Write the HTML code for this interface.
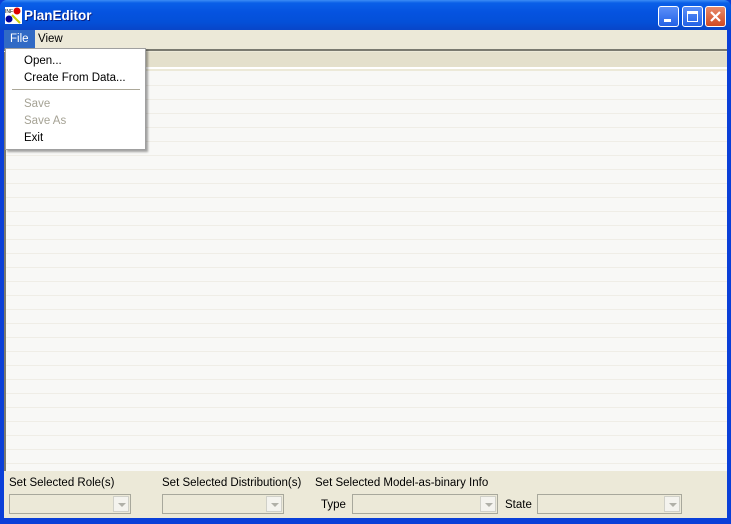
<!DOCTYPE html>
<html><head><style>
*{margin:0;padding:0;box-sizing:border-box}
body{width:731px;height:524px;overflow:hidden;background:#0a3fd8;font-family:"Liberation Sans",sans-serif;font-size:11.5px;position:relative}
.title{position:absolute;left:0;top:0;width:731px;height:30px;background:linear-gradient(#3d8cf5 0,#0a5fe8 3px,#0553e0 12px,#0450d8 22px,#0845c8 30px);border-radius:7px 7px 0 0}
.title span{position:absolute;left:24px;top:8px;color:#fff;font-weight:bold;font-size:13.5px;font-family:"Liberation Sans",sans-serif;text-shadow:1px 1px #0a1f80}
.btn{position:absolute;top:6px;width:21px;height:21px;border:1px solid #fff;border-radius:3px;background:linear-gradient(#5b8ff8,#2261e6)}
.frame{position:absolute;left:4px;top:30px;width:723px;height:488px;background:#ece9d8}
.menu{position:absolute;left:0;top:0;height:19px;width:723px}
.menu div{position:absolute;top:0;height:19px;line-height:19px;padding:0 6px}
.hl{background:#316ac5;color:#fff}
.table{position:absolute;left:0;top:19px;width:723px;height:420px;border-top:2px solid #7a7a70}
.thead{position:absolute;left:2px;top:1px;width:721px;height:17px;background:#e4e0cc;border-bottom:2px solid #fff}
.rows{position:absolute;left:2px;top:20px;width:721px;height:400px;background:#f8f8f6;
background-image:repeating-linear-gradient(to bottom,transparent 0,transparent 13px,#efede6 13px,#efede6 14px);background-position:0 1px}
.lb{position:absolute;left:0;top:1px;width:2px;height:419px;background:#7a7a70}
.bot{position:absolute;color:#000}
.cb{position:absolute;height:20px;border:1px solid #a8a89c;background:#ece9d8}
.cb i{position:absolute;right:1px;top:1px;width:16px;height:16px;border:1px solid #d0d0c8;background:#f4f3ee}
.cb i:after{content:"";position:absolute;left:4px;top:6px;border:4px solid transparent;border-top:4px solid #b0b0a8}
.dd{position:absolute;left:5px;top:48px;width:141px;height:102px;background:#fff;border:1px solid #a0a0a0;box-shadow:2px 2px 2px rgba(0,0,0,.35)}
.dd div{position:absolute;left:18px}
.g{color:#a5a294}
</style></head><body>
<div class="title">
<svg style="position:absolute;left:5px;top:7px" width="17" height="17"><rect width="17" height="17" fill="#fff"/><circle cx="12" cy="4" r="3.5" fill="#d00"/><circle cx="4" cy="12" r="3.5" fill="#009"/><path d="M7 8l8 8" stroke="#cc0" stroke-width="2"/><text x="0" y="6" font-size="5" fill="#000">INF</text></svg>
<span>PlanEditor</span>
<div class="btn" style="left:658px"><div style="position:absolute;left:5px;top:12px;width:7px;height:3px;background:#fff"></div></div>
<div class="btn" style="left:682px"><div style="position:absolute;left:4px;top:4px;width:11px;height:11px;border:1px solid #fff;border-top-width:3px"></div></div>
<div class="btn" style="left:705px;background:linear-gradient(#e88a6a,#d04a22)"><svg width="19" height="19"><path d="M5 5l9 9M14 5l-9 9" stroke="#fff" stroke-width="2.2"/></svg></div>
</div>
<div class="frame">
<div class="menu"><div class="hl" style="left:0">File</div><div style="left:28px">View</div></div>
<div class="table"><div class="lb"></div><div class="thead"></div><div class="rows"></div></div>
<div class="bot" style="left:5px;top:447px">Set Selected Role(s)</div>
<div class="bot" style="left:158px;top:447px">Set Selected Distribution(s)</div>
<div class="bot" style="left:311px;top:447px">Set Selected Model-as-binary Info</div>
<div class="bot" style="left:317px;top:469px">Type</div>
<div class="bot" style="left:501px;top:469px">State</div>
<div class="cb" style="left:5px;top:464px;width:122px"><i></i></div>
<div class="cb" style="left:158px;top:464px;width:122px"><i></i></div>
<div class="cb" style="left:348px;top:464px;width:146px"><i></i></div>
<div class="cb" style="left:533px;top:464px;width:145px"><i></i></div>
</div>
<div class="dd">
<div style="top:6px">Open...</div>
<div style="top:23px">Create From Data...</div>
<div style="left:6px;top:40px;width:128px;height:1px;background:#aca899"></div>
<div class="g" style="top:49px">Save</div>
<div class="g" style="top:66px">Save As</div>
<div style="top:83px">Exit</div>
</div>
</body></html>
